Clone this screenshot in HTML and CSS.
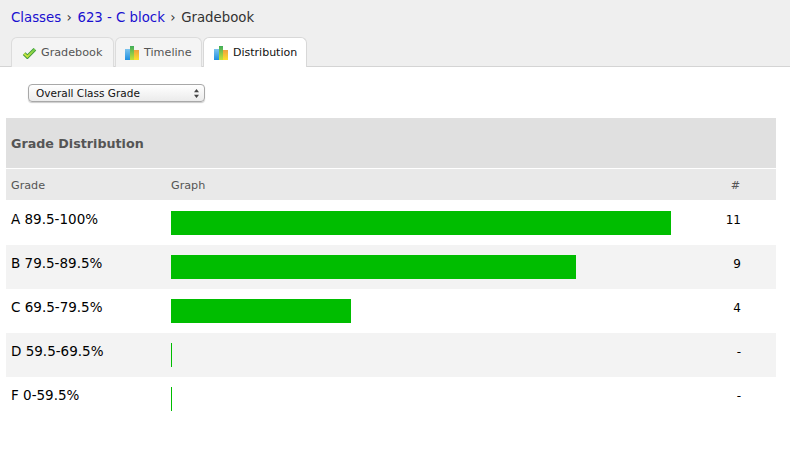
FILE: index.html
```html
<!DOCTYPE html>
<html lang="en">
<head>
<meta charset="utf-8">
<title>Gradebook</title>
<link rel="stylesheet" href="styles.css">
</head>
<body>
<svg class="defs" width="0" height="0" aria-hidden="true">
  <defs>
    <linearGradient id="gb" x1="0" y1="0" x2="0" y2="1"><stop offset="0" stop-color="#7cc4ee"/><stop offset="1" stop-color="#1f8fe0"/></linearGradient>
    <linearGradient id="gg" x1="0" y1="0" x2="0" y2="1"><stop offset="0" stop-color="#3fae5a"/><stop offset="1" stop-color="#c6e03a"/></linearGradient>
    <linearGradient id="go" x1="0" y1="0" x2="0" y2="1"><stop offset="0" stop-color="#f0a040"/><stop offset="1" stop-color="#fbe02a"/></linearGradient>
    <linearGradient id="gc" x1="0" y1="1" x2="1" y2="0"><stop offset="0" stop-color="#d8e83a"/><stop offset="1" stop-color="#6ccb4a"/></linearGradient>
    <symbol id="chart" viewBox="0 0 14 14"><rect x="0" y="3" width="5" height="11" fill="url(#gb)"/><rect x="5" y="0" width="4" height="14" fill="url(#gg)"/><rect x="9" y="4" width="5" height="10" fill="url(#go)"/></symbol>
  </defs>
</svg>
<header class="top">
  <nav class="crumbs"><a href="#">Classes</a><span class="sep">›</span><a href="#">623 - C block</a><span class="sep">›</span><span>Gradebook</span></nav>
  <div class="tabs">
    <a class="tab t1" href="#"><svg class="check" viewBox="0 0 14 11"><path d="M2 6 L5 9 L12 2" fill="none" stroke="#3f9a3a" stroke-width="3.600"/><path d="M2 6 L5 9 L12 2" fill="none" stroke="url(#gc)" stroke-width="1.800"/></svg>Gradebook</a>
    <a class="tab t2" href="#"><svg class="ico"><use href="#chart"/></svg>Timeline</a>
    <a class="tab t3 active" href="#"><svg class="ico"><use href="#chart"/></svg>Distribution</a>
  </div>
</header>
<main>
  <div class="filter">
    <div class="select"><span>Overall Class Grade</span><svg class="arrows" viewBox="0 0 7 11"><path d="M3.500 1 L6 4.200 H1 Z M3.500 10 L6 6.800 H1 Z" fill="#444"/></svg></div>
  </div>
  <section class="dist">
    <h2 class="title">Grade Distribution</h2>
    <div class="row head"><div>Grade</div><div>Graph</div><div class="num">#</div></div>
    <div class="row"><div>A 89.5-100%</div><div><div class="bar w500"></div></div><div class="num">11</div></div>
    <div class="row alt"><div>B 79.5-89.5%</div><div><div class="bar w405"></div></div><div class="num">9</div></div>
    <div class="row"><div>C 69.5-79.5%</div><div><div class="bar w180"></div></div><div class="num">4</div></div>
    <div class="row alt"><div>D 59.5-69.5%</div><div><div class="bar w1"></div></div><div class="num">-</div></div>
    <div class="row"><div>F 0-59.5%</div><div><div class="bar w1"></div></div><div class="num">-</div></div>
  </section>
</main>
</body>
</html>
```
FILE: styles.css
```css
* { box-sizing: border-box; }
html, body { margin: 0; padding: 0; background: #fff; }
body { font-family: "DejaVu Sans", Verdana, sans-serif; font-size: 13.500px; color: #000; height: 456px; overflow: hidden; }
a { text-decoration: none; }
.defs { display: block; height: 0; }
.top { background: #efefef; height: 67px; border-bottom: 1px solid #d4d4d4; padding: 10px 0 0 11px; }
.crumbs { font-size: 13.300px; line-height: 16px; height: 27px; color: #333; }
.crumbs a { color: #1a10d0; }
.sep { margin: 0 5.500px; color: #333; }
.tabs { display: flex; gap: 1px; height: 30px; }
.tab { display: flex; align-items: center; height: 30px; padding-left: 10px; font-size: 11.200px; color: #555; background: #f4f4f4; border: 1px solid #dcdcdc; border-bottom: 0; border-radius: 6px 6px 0 0; }
.t1 { width: 103px; }
.t2 { width: 87px; padding-left: 9px; }
.t3 { width: 104px; font-size: 11px; }
.tab.active { background: #fff; color: #111; border-color: #d8d8d8; }
.ico { width: 14px; height: 14px; margin-right: 5px; flex: none; }
.check { width: 15px; height: 12px; margin-right: 4px; flex: none; }
.filter { padding: 17px 0 0 28px; height: 51px; }
.select { width: 177px; height: 18px; display: flex; align-items: center; justify-content: space-between; padding: 0 4px 0 7px; font-size: 10.500px; color: #111; background: linear-gradient(#fff, #ebebeb); border: 1px solid #a8a8a8; border-radius: 4px; box-shadow: 0 1px 1px #ccc; }
.arrows { width: 7px; height: 11px; }
.dist { margin: 0 14px 0 6px; }
.title { margin: 0; height: 51px; padding: 0 5px; display: flex; align-items: center; font-size: 12.700px; font-weight: bold; color: #555; background: #e0e0e0; border-bottom: 1px solid #fff; }
.row { display: grid; grid-template-columns: 160px 1fr 60px; align-items: start; height: 44px; padding: 10px 0 0 5px; line-height: 16px; }
.row.head { height: 31px; margin-bottom: 1px; padding-top: 9px; background: #e9e9e9; font-size: 11.200px; color: #555; }
.row.alt { background: #f3f3f3; }
.num { text-align: right; padding: 1px 35px 0 0; font-size: 12px; }
.head .num { padding: 0 36px 0 0; font-size: 11.200px; }
.bar { height: 24px; background: #00bd00; }
.w500 { width: 500px; }
.w405 { width: 405px; }
.w180 { width: 180px; }
.w1 { width: 1px; }
```
